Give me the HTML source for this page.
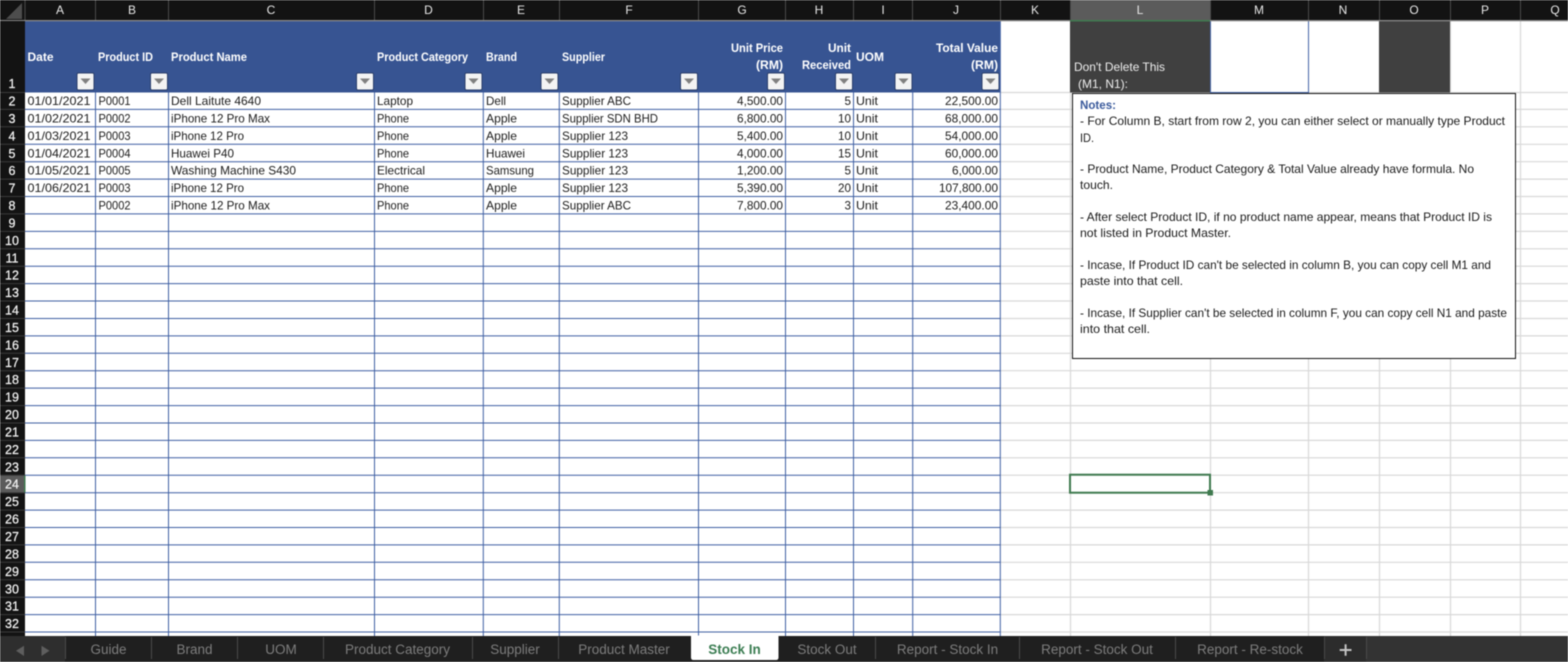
<!DOCTYPE html>
<html><head><meta charset="utf-8"><title>Stock In</title>
<style>
html,body{margin:0;padding:0;background:#fff;width:1568px;height:662px;overflow:hidden}
svg{display:block;position:absolute;left:0;top:0;filter:blur(.4px)}
text{font-family:"Liberation Sans",sans-serif;font-size:12px;fill:#1c1c1c}
.h{fill:#e8e8e8;text-anchor:middle;font-size:12px}
.r{fill:#f2f2f2;text-anchor:middle;font-size:12.5px;stroke:#f2f2f2;stroke-width:.25px}
.w{fill:#fff;font-weight:bold}
.n{fill:#1a1a1a}
.t{font-size:13.5px;fill:#7d7d7d;text-anchor:middle}
</style></head><body>
<svg width="1568" height="662" viewBox="0 0 1568 662" xmlns="http://www.w3.org/2000/svg">
<defs>
<g id="f"><rect x="0.5" y="0.5" width="17" height="17" rx="1.5" fill="#f3f3f3" stroke="#2b3f6b" stroke-width="1"/><path d="M4 6H14L9 11.5Z" fill="#808080"/></g>
</defs>
<rect width="1568" height="662" fill="#fff"/>

<!-- gray grid -->
<path fill="none" stroke="#d8d8d8" stroke-width="1.2" d="M1000 109.4H1568M1000 126.8H1568M1000 144.3H1568M1000 161.7H1568M1000 179.1H1568M1000 196.5H1568M1000 213.9H1568M1000 231.4H1568M1000 248.8H1568M1000 266.2H1568M1000 283.6H1568M1000 301H1568M1000 318.5H1568M1000 335.9H1568M1000 353.3H1568M1000 370.7H1568M1000 388.1H1568M1000 405.6H1568M1000 423H1568M1000 440.4H1568M1000 457.8H1568M1000 475.2H1568M1000 492.7H1568M1000 510.1H1568M1000 527.5H1568M1000 544.9H1568M1000 562.3H1568M1000 579.8H1568M1000 597.2H1568M1000 614.6H1568M1000 632H1568"/>
<path fill="none" stroke="#d8d8d8" stroke-width="1.2" d="M1070.5 21V636M1210.5 21V636M1308.5 21V636M1379.5 21V636M1450.5 21V636M1520.5 21V636M1000 92.5H1568"/>

<!-- blue header -->
<rect x="25" y="21" width="975" height="71.5" fill="#375492"/>
<!-- blue grid -->
<path fill="none" stroke="#3f5fa3" stroke-width="1" d="M25 109.4H1000M25 126.8H1000M25 144.3H1000M25 161.7H1000M25 179.1H1000M25 196.5H1000M25 213.9H1000M25 231.4H1000M25 248.8H1000M25 266.2H1000M25 283.6H1000M25 301H1000M25 318.5H1000M25 335.9H1000M25 353.3H1000M25 370.7H1000M25 388.1H1000M25 405.6H1000M25 423H1000M25 440.4H1000M25 457.8H1000M25 475.2H1000M25 492.7H1000M25 510.1H1000M25 527.5H1000M25 544.9H1000M25 562.3H1000M25 579.8H1000M25 597.2H1000M25 614.6H1000M25 632H1000"/>
<path fill="none" stroke="#3f5fa3" stroke-width="1" d="M95.5 92V636M168.5 92V636M374.5 92V636M483.3 92V636M559.3 92V636M698.5 92V636M785.5 92V636M853.5 92V636M912.7 92V636M1000.3 21V636"/>

<!-- L / M / N / O cells -->
<rect x="1070" y="21" width="140" height="71.5" fill="#404040"/>
<rect x="1379" y="21" width="71" height="71.5" fill="#404040"/>
<path fill="none" stroke="#4a6aad" stroke-width="1" d="M1210.5 21V92.5H1308.5V21"/>
<text x="1074" y="71" style="fill:#eee" textLength="91" lengthAdjust="spacingAndGlyphs">Don't Delete This</text>
<text x="1078" y="88" style="fill:#eee" textLength="50" lengthAdjust="spacingAndGlyphs">(M1, N1):</text>

<!-- header bar -->
<rect x="0" y="0" width="1568" height="21" fill="#131313"/>
<rect x="1070" y="0" width="140" height="20" fill="#5b5b5b"/>
<rect x="1070" y="20" width="140" height="1.5" fill="#3f7a4f"/>
<rect x="0" y="20" width="1070" height="1.3" fill="#8a8a8a"/>
<rect x="1210" y="20" width="358" height="1.3" fill="#8a8a8a"/>
<path fill="none" stroke="#4a4a4a" stroke-width="1" d="M25 0V20M95.5 0V20M168.5 0V20M374.5 0V20M483.5 0V20M559.5 0V20M698.5 0V20M785.5 0V20M853.5 0V20M912.5 0V20M1000.5 0V20M1070.5 0V20M1210.5 0V20M1308.5 0V20M1379.5 0V20M1450.5 0V20M1520.5 0V20"/>
<path d="M22 3V19H6Z" fill="#4d4d4d"/>
<text class="h" x="60" y="14">A</text><text class="h" x="132" y="14">B</text><text class="h" x="271" y="14">C</text><text class="h" x="428.5" y="14">D</text><text class="h" x="521" y="14">E</text><text class="h" x="629" y="14">F</text><text class="h" x="742" y="14">G</text><text class="h" x="819" y="14">H</text><text class="h" x="883" y="14">I</text><text class="h" x="956" y="14">J</text><text class="h" x="1035" y="14">K</text><text class="h" x="1140" y="14">L</text><text class="h" x="1259" y="14">M</text><text class="h" x="1343" y="14">N</text><text class="h" x="1414" y="14">O</text><text class="h" x="1485" y="14">P</text><text class="h" x="1555" y="14">Q</text>

<!-- row header -->
<rect x="0" y="21" width="25" height="615" fill="#131313"/>
<rect x="0" y="475.2" width="24" height="17.5" fill="#5b5b5b"/>
<rect x="24" y="475.2" width="1.5" height="17.5" fill="#3f7a4f"/>
<path fill="none" stroke="#3a3a3a" stroke-width="1" d="M0 92.5H25M0 109.4H25M0 126.8H25M0 144.3H25M0 161.7H25M0 179.1H25M0 196.5H25M0 213.9H25M0 231.4H25M0 248.8H25M0 266.2H25M0 283.6H25M0 301H25M0 318.5H25M0 335.9H25M0 353.3H25M0 370.7H25M0 388.1H25M0 405.6H25M0 423H25M0 440.4H25M0 457.8H25M0 475.2H25M0 492.7H25M0 510.1H25M0 527.5H25M0 544.9H25M0 562.3H25M0 579.8H25M0 597.2H25M0 614.6H25M0 632H25"/>
<text class="r" x="12" y="88">1</text><text class="r" x="12" y="105.5">2</text><text class="r" x="12" y="122.9">3</text><text class="r" x="12" y="140.3">4</text><text class="r" x="12" y="157.8">5</text><text class="r" x="12" y="175.2">6</text><text class="r" x="12" y="192.6">7</text><text class="r" x="12" y="210">8</text><text class="r" x="12" y="227.4">9</text><text class="r" x="12" y="244.9">10</text><text class="r" x="12" y="262.3">11</text><text class="r" x="12" y="279.7">12</text><text class="r" x="12" y="297.1">13</text><text class="r" x="12" y="314.5">14</text><text class="r" x="12" y="332">15</text><text class="r" x="12" y="349.4">16</text><text class="r" x="12" y="366.8">17</text><text class="r" x="12" y="384.2">18</text><text class="r" x="12" y="401.6">19</text><text class="r" x="12" y="419.1">20</text><text class="r" x="12" y="436.5">21</text><text class="r" x="12" y="453.9">22</text><text class="r" x="12" y="471.3">23</text><text class="r" x="12" y="488.7">24</text><text class="r" x="12" y="506.2">25</text><text class="r" x="12" y="523.6">26</text><text class="r" x="12" y="541">27</text><text class="r" x="12" y="558.4">28</text><text class="r" x="12" y="575.8">29</text><text class="r" x="12" y="593.3">30</text><text class="r" x="12" y="610.7">31</text><text class="r" x="12" y="628.1">32</text>

<!-- table headers -->
<text class="w" x="27.5" y="61" textLength="26" lengthAdjust="spacingAndGlyphs">Date</text>
<text class="w" x="98" y="61" textLength="55" lengthAdjust="spacingAndGlyphs">Product ID</text>
<text class="w" x="171" y="61" textLength="76" lengthAdjust="spacingAndGlyphs">Product Name</text>
<text class="w" x="377" y="61" textLength="91" lengthAdjust="spacingAndGlyphs">Product Category</text>
<text class="w" x="486" y="61" textLength="31" lengthAdjust="spacingAndGlyphs">Brand</text>
<text class="w" x="562" y="61" textLength="43" lengthAdjust="spacingAndGlyphs">Supplier</text>
<text class="w" x="731" y="52" textLength="52" lengthAdjust="spacingAndGlyphs">Unit Price</text>
<text class="w" x="756" y="69" textLength="27" lengthAdjust="spacingAndGlyphs">(RM)</text>
<text class="w" x="828" y="52" textLength="23" lengthAdjust="spacingAndGlyphs">Unit</text>
<text class="w" x="802" y="69" textLength="49" lengthAdjust="spacingAndGlyphs">Received</text>
<text class="w" x="856" y="61" textLength="28" lengthAdjust="spacingAndGlyphs">UOM</text>
<text class="w" x="936" y="52" textLength="62" lengthAdjust="spacingAndGlyphs">Total Value</text>
<text class="w" x="971" y="69" textLength="27" lengthAdjust="spacingAndGlyphs">(RM)</text>
<use href="#f" x="76.5" y="72.5"/><use href="#f" x="150" y="72.5"/><use href="#f" x="356" y="72.5"/><use href="#f" x="464.5" y="72.5"/><use href="#f" x="540.5" y="72.5"/><use href="#f" x="680" y="72.5"/><use href="#f" x="767" y="72.5"/><use href="#f" x="835" y="72.5"/><use href="#f" x="894.5" y="72.5"/><use href="#f" x="981.5" y="72.5"/>

<!-- row 2 -->
<text x="27.5" y="105" textLength="63" lengthAdjust="spacingAndGlyphs">01/01/2021</text><text x="98.5" y="105" textLength="32" lengthAdjust="spacingAndGlyphs">P0001</text><text x="171" y="105" textLength="90" lengthAdjust="spacingAndGlyphs">Dell Laitute 4640</text><text x="377" y="105" textLength="36" lengthAdjust="spacingAndGlyphs">Laptop</text><text x="486" y="105" textLength="20" lengthAdjust="spacingAndGlyphs">Dell</text><text x="562" y="105" textLength="69" lengthAdjust="spacingAndGlyphs">Supplier ABC</text><text x="737" y="105" textLength="46" lengthAdjust="spacingAndGlyphs">4,500.00</text><text x="844.5" y="105" textLength="6.5" lengthAdjust="spacingAndGlyphs">5</text><text x="856" y="105" textLength="22" lengthAdjust="spacingAndGlyphs">Unit</text><text x="945" y="105" textLength="53" lengthAdjust="spacingAndGlyphs">22,500.00</text>
<!-- row 3 -->
<text x="27.5" y="122.4" textLength="63" lengthAdjust="spacingAndGlyphs">01/02/2021</text><text x="98.5" y="122.4" textLength="32" lengthAdjust="spacingAndGlyphs">P0002</text><text x="171" y="122.4" textLength="99" lengthAdjust="spacingAndGlyphs">iPhone 12 Pro Max</text><text x="377" y="122.4" textLength="32" lengthAdjust="spacingAndGlyphs">Phone</text><text x="486" y="122.4" textLength="31" lengthAdjust="spacingAndGlyphs">Apple</text><text x="562" y="122.4" textLength="96" lengthAdjust="spacingAndGlyphs">Supplier SDN BHD</text><text x="737" y="122.4" textLength="46" lengthAdjust="spacingAndGlyphs">6,800.00</text><text x="838" y="122.4" textLength="13" lengthAdjust="spacingAndGlyphs">10</text><text x="856" y="122.4" textLength="22" lengthAdjust="spacingAndGlyphs">Unit</text><text x="945" y="122.4" textLength="53" lengthAdjust="spacingAndGlyphs">68,000.00</text>
<!-- row 4 -->
<text x="27.5" y="139.8" textLength="63" lengthAdjust="spacingAndGlyphs">01/03/2021</text><text x="98.5" y="139.8" textLength="32" lengthAdjust="spacingAndGlyphs">P0003</text><text x="171" y="139.8" textLength="73" lengthAdjust="spacingAndGlyphs">iPhone 12 Pro</text><text x="377" y="139.8" textLength="32" lengthAdjust="spacingAndGlyphs">Phone</text><text x="486" y="139.8" textLength="31" lengthAdjust="spacingAndGlyphs">Apple</text><text x="562" y="139.8" textLength="66" lengthAdjust="spacingAndGlyphs">Supplier 123</text><text x="737" y="139.8" textLength="46" lengthAdjust="spacingAndGlyphs">5,400.00</text><text x="838" y="139.8" textLength="13" lengthAdjust="spacingAndGlyphs">10</text><text x="856" y="139.8" textLength="22" lengthAdjust="spacingAndGlyphs">Unit</text><text x="945" y="139.8" textLength="53" lengthAdjust="spacingAndGlyphs">54,000.00</text>
<!-- row 5 -->
<text x="27.5" y="157.3" textLength="63" lengthAdjust="spacingAndGlyphs">01/04/2021</text><text x="98.5" y="157.3" textLength="32" lengthAdjust="spacingAndGlyphs">P0004</text><text x="171" y="157.3" textLength="63" lengthAdjust="spacingAndGlyphs">Huawei P40</text><text x="377" y="157.3" textLength="32" lengthAdjust="spacingAndGlyphs">Phone</text><text x="486" y="157.3" textLength="39" lengthAdjust="spacingAndGlyphs">Huawei</text><text x="562" y="157.3" textLength="66" lengthAdjust="spacingAndGlyphs">Supplier 123</text><text x="737" y="157.3" textLength="46" lengthAdjust="spacingAndGlyphs">4,000.00</text><text x="838" y="157.3" textLength="13" lengthAdjust="spacingAndGlyphs">15</text><text x="856" y="157.3" textLength="22" lengthAdjust="spacingAndGlyphs">Unit</text><text x="945" y="157.3" textLength="53" lengthAdjust="spacingAndGlyphs">60,000.00</text>
<!-- row 6 -->
<text x="27.5" y="174.7" textLength="63" lengthAdjust="spacingAndGlyphs">01/05/2021</text><text x="98.5" y="174.7" textLength="32" lengthAdjust="spacingAndGlyphs">P0005</text><text x="171" y="174.7" textLength="125" lengthAdjust="spacingAndGlyphs">Washing Machine S430</text><text x="377" y="174.7" textLength="48" lengthAdjust="spacingAndGlyphs">Electrical</text><text x="486" y="174.7" textLength="48" lengthAdjust="spacingAndGlyphs">Samsung</text><text x="562" y="174.7" textLength="66" lengthAdjust="spacingAndGlyphs">Supplier 123</text><text x="737" y="174.7" textLength="46" lengthAdjust="spacingAndGlyphs">1,200.00</text><text x="844.5" y="174.7" textLength="6.5" lengthAdjust="spacingAndGlyphs">5</text><text x="856" y="174.7" textLength="22" lengthAdjust="spacingAndGlyphs">Unit</text><text x="952" y="174.7" textLength="46" lengthAdjust="spacingAndGlyphs">6,000.00</text>
<!-- row 7 -->
<text x="27.5" y="192.1" textLength="63" lengthAdjust="spacingAndGlyphs">01/06/2021</text><text x="98.5" y="192.1" textLength="32" lengthAdjust="spacingAndGlyphs">P0003</text><text x="171" y="192.1" textLength="73" lengthAdjust="spacingAndGlyphs">iPhone 12 Pro</text><text x="377" y="192.1" textLength="32" lengthAdjust="spacingAndGlyphs">Phone</text><text x="486" y="192.1" textLength="31" lengthAdjust="spacingAndGlyphs">Apple</text><text x="562" y="192.1" textLength="66" lengthAdjust="spacingAndGlyphs">Supplier 123</text><text x="737" y="192.1" textLength="46" lengthAdjust="spacingAndGlyphs">5,390.00</text><text x="838" y="192.1" textLength="13" lengthAdjust="spacingAndGlyphs">20</text><text x="856" y="192.1" textLength="22" lengthAdjust="spacingAndGlyphs">Unit</text><text x="939" y="192.1" textLength="59" lengthAdjust="spacingAndGlyphs">107,800.00</text>
<!-- row 8 -->
<text x="98.5" y="209.5" textLength="32" lengthAdjust="spacingAndGlyphs">P0002</text><text x="171" y="209.5" textLength="99" lengthAdjust="spacingAndGlyphs">iPhone 12 Pro Max</text><text x="377" y="209.5" textLength="32" lengthAdjust="spacingAndGlyphs">Phone</text><text x="486" y="209.5" textLength="31" lengthAdjust="spacingAndGlyphs">Apple</text><text x="562" y="209.5" textLength="69" lengthAdjust="spacingAndGlyphs">Supplier ABC</text><text x="737" y="209.5" textLength="46" lengthAdjust="spacingAndGlyphs">7,800.00</text><text x="844.5" y="209.5" textLength="6.5" lengthAdjust="spacingAndGlyphs">3</text><text x="856" y="209.5" textLength="22" lengthAdjust="spacingAndGlyphs">Unit</text><text x="945" y="209.5" textLength="53" lengthAdjust="spacingAndGlyphs">23,400.00</text>

<!-- notes box -->
<rect x="1072.5" y="93.5" width="443" height="265" fill="#fff" stroke="#111" stroke-width="1"/>
<text x="1080" y="109" textLength="36" lengthAdjust="spacingAndGlyphs" style="fill:#3a5a9c;font-weight:bold">Notes:</text>
<text class="n" x="1080" y="125" textLength="425" lengthAdjust="spacingAndGlyphs">- For Column B, start from row 2, you can either select or manually type Product</text>
<text class="n" x="1080" y="142" textLength="14" lengthAdjust="spacingAndGlyphs">ID.</text>
<text class="n" x="1080" y="173" textLength="394" lengthAdjust="spacingAndGlyphs">- Product Name, Product Category &amp; Total Value already have formula. No</text>
<text class="n" x="1080" y="189" textLength="33" lengthAdjust="spacingAndGlyphs">touch.</text>
<text class="n" x="1080" y="221" textLength="412" lengthAdjust="spacingAndGlyphs">- After select Product ID, if no product name appear, means that Product ID is</text>
<text class="n" x="1080" y="237" textLength="151" lengthAdjust="spacingAndGlyphs">not listed in Product Master.</text>
<text class="n" x="1080" y="269" textLength="411" lengthAdjust="spacingAndGlyphs">- Incase, If Product ID can't be selected in column B, you can copy cell M1 and</text>
<text class="n" x="1080" y="285" textLength="103" lengthAdjust="spacingAndGlyphs">paste into that cell.</text>
<text class="n" x="1080" y="317" textLength="427" lengthAdjust="spacingAndGlyphs">- Incase, If Supplier can't be selected in column F, you can copy cell N1 and paste</text>
<text class="n" x="1080" y="333" textLength="70" lengthAdjust="spacingAndGlyphs">into that cell.</text>

<!-- selection -->
<rect x="1070" y="474.7" width="140" height="18" fill="none" stroke="#3f7a4f" stroke-width="2"/>
<rect x="1207.5" y="490" width="5.5" height="5.5" fill="#3f7a4f"/>

<!-- tab bar -->
<rect x="0" y="636" width="1568" height="26" fill="#1f1f1f"/>
<rect x="0" y="636" width="65" height="26" fill="#2e2e2e"/>
<rect x="1324" y="636" width="244" height="26" fill="#333"/>
<rect x="1324" y="636" width="42" height="26" fill="#2c2c2c"/>
<path d="M24 645.7V656L16 650.8Z" fill="#5e5e5e"/>
<path d="M41.5 645.7V656L49.5 650.8Z" fill="#5e5e5e"/>
<path fill="none" stroke="#4a4a4a" stroke-width="1" d="M65.5 637V659M151.5 637V659M237.5 637V659M323.5 637V659M472.5 637V659M558.5 637V659M875.5 637V659M1019.5 637V659M1175.5 637V659M1324.5 637V659M1366.5 637V659"/>
<path d="M691 635.5H778.5V657.5Q778.5 660 776 660H693.5Q691 660 691 657.5Z" fill="#fff"/>
<text class="t" x="108.5" y="654">Guide</text>
<text class="t" x="194.5" y="654">Brand</text>
<text class="t" x="281" y="654">UOM</text>
<text class="t" x="397.5" y="654">Product Category</text>
<text class="t" x="515" y="654">Supplier</text>
<text class="t" x="624" y="654">Product Master</text>
<text class="t" x="734.5" y="654" style="fill:#3b7d52;font-weight:bold">Stock In</text>
<text class="t" x="827" y="654">Stock Out</text>
<text class="t" x="947.5" y="654">Report - Stock In</text>
<text class="t" x="1097" y="654">Report - Stock Out</text>
<text class="t" x="1250" y="654">Report - Re-stock</text>
<path d="M1339.7 650H1351.5M1345.6 644.2V655.8" fill="none" stroke="#c4c4c4" stroke-width="2"/>
</svg>
</body></html>
